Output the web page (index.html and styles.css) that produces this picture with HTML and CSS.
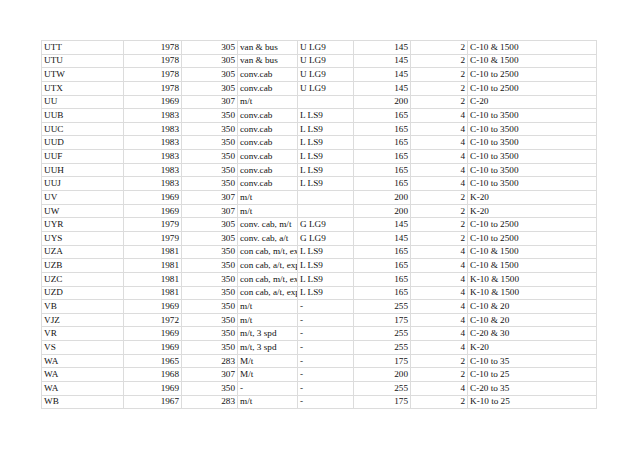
FILE: index.html
```html
<!DOCTYPE html>
<html>
<head>
<meta charset="utf-8">
<link rel="stylesheet" href="styles.css">
</head>
<body>
<table class="sheet">
<colgroup>
<col class="c1"><col class="c2"><col class="c3"><col class="c4"><col class="c5"><col class="c6"><col class="c7"><col class="c8">
</colgroup>
<tbody>
<tr><td>UTT</td><td class="r">1978</td><td class="r">305</td><td>van &amp; bus</td><td>U LG9</td><td class="r">145</td><td class="r">2</td><td>C-10 &amp; 1500</td></tr>
<tr><td>UTU</td><td class="r">1978</td><td class="r">305</td><td>van &amp; bus</td><td>U LG9</td><td class="r">145</td><td class="r">2</td><td>C-10 &amp; 1500</td></tr>
<tr><td>UTW</td><td class="r">1978</td><td class="r">305</td><td>conv.cab</td><td>U LG9</td><td class="r">145</td><td class="r">2</td><td>C-10 to 2500</td></tr>
<tr><td>UTX</td><td class="r">1978</td><td class="r">305</td><td>conv.cab</td><td>U LG9</td><td class="r">145</td><td class="r">2</td><td>C-10 to 2500</td></tr>
<tr><td>UU</td><td class="r">1969</td><td class="r">307</td><td>m/t</td><td></td><td class="r">200</td><td class="r">2</td><td>C-20</td></tr>
<tr><td>UUB</td><td class="r">1983</td><td class="r">350</td><td>conv.cab</td><td>L LS9</td><td class="r">165</td><td class="r">4</td><td>C-10 to 3500</td></tr>
<tr><td>UUC</td><td class="r">1983</td><td class="r">350</td><td>conv.cab</td><td>L LS9</td><td class="r">165</td><td class="r">4</td><td>C-10 to 3500</td></tr>
<tr><td>UUD</td><td class="r">1983</td><td class="r">350</td><td>conv.cab</td><td>L LS9</td><td class="r">165</td><td class="r">4</td><td>C-10 to 3500</td></tr>
<tr><td>UUF</td><td class="r">1983</td><td class="r">350</td><td>conv.cab</td><td>L LS9</td><td class="r">165</td><td class="r">4</td><td>C-10 to 3500</td></tr>
<tr><td>UUH</td><td class="r">1983</td><td class="r">350</td><td>conv.cab</td><td>L LS9</td><td class="r">165</td><td class="r">4</td><td>C-10 to 3500</td></tr>
<tr><td>UUJ</td><td class="r">1983</td><td class="r">350</td><td>conv.cab</td><td>L LS9</td><td class="r">165</td><td class="r">4</td><td>C-10 to 3500</td></tr>
<tr><td>UV</td><td class="r">1969</td><td class="r">307</td><td>m/t</td><td></td><td class="r">200</td><td class="r">2</td><td>K-20</td></tr>
<tr><td>UW</td><td class="r">1969</td><td class="r">307</td><td>m/t</td><td></td><td class="r">200</td><td class="r">2</td><td>K-20</td></tr>
<tr><td>UYR</td><td class="r">1979</td><td class="r">305</td><td>conv. cab, m/t</td><td>G LG9</td><td class="r">145</td><td class="r">2</td><td>C-10 to 2500</td></tr>
<tr><td>UYS</td><td class="r">1979</td><td class="r">305</td><td>conv. cab, a/t</td><td>G LG9</td><td class="r">145</td><td class="r">2</td><td>C-10 to 2500</td></tr>
<tr><td>UZA</td><td class="r">1981</td><td class="r">350</td><td class="clip">con cab, m/t, exp cab</td><td>L LS9</td><td class="r">165</td><td class="r">4</td><td>C-10 &amp; 1500</td></tr>
<tr><td>UZB</td><td class="r">1981</td><td class="r">350</td><td class="clip">con cab, a/t, exp cab</td><td>L LS9</td><td class="r">165</td><td class="r">4</td><td>C-10 &amp; 1500</td></tr>
<tr><td>UZC</td><td class="r">1981</td><td class="r">350</td><td class="clip">con cab, m/t, exp cab</td><td>L LS9</td><td class="r">165</td><td class="r">4</td><td>K-10 &amp; 1500</td></tr>
<tr><td>UZD</td><td class="r">1981</td><td class="r">350</td><td class="clip">con cab, a/t, exp cab</td><td>L LS9</td><td class="r">165</td><td class="r">4</td><td>K-10 &amp; 1500</td></tr>
<tr><td>VB</td><td class="r">1969</td><td class="r">350</td><td>m/t</td><td>-</td><td class="r">255</td><td class="r">4</td><td>C-10 &amp; 20</td></tr>
<tr><td>VJZ</td><td class="r">1972</td><td class="r">350</td><td>m/t</td><td>-</td><td class="r">175</td><td class="r">4</td><td>C-10 &amp; 20</td></tr>
<tr><td>VR</td><td class="r">1969</td><td class="r">350</td><td>m/t, 3 spd</td><td>-</td><td class="r">255</td><td class="r">4</td><td>C-20 &amp; 30</td></tr>
<tr><td>VS</td><td class="r">1969</td><td class="r">350</td><td>m/t, 3 spd</td><td>-</td><td class="r">255</td><td class="r">4</td><td>K-20</td></tr>
<tr><td>WA</td><td class="r">1965</td><td class="r">283</td><td>M/t</td><td>-</td><td class="r">175</td><td class="r">2</td><td>C-10 to 35</td></tr>
<tr><td>WA</td><td class="r">1968</td><td class="r">307</td><td>M/t</td><td>-</td><td class="r">200</td><td class="r">2</td><td>C-10 to 25</td></tr>
<tr><td>WA</td><td class="r">1969</td><td class="r">350</td><td>-</td><td>-</td><td class="r">255</td><td class="r">4</td><td>C-20 to 35</td></tr>
<tr><td>WB</td><td class="r">1967</td><td class="r">283</td><td>m/t</td><td>-</td><td class="r">175</td><td class="r">2</td><td>K-10 to 25</td></tr>
</tbody>
</table>
</body>
</html>
```
FILE: styles.css
```css
html, body {
  margin: 0;
  padding: 0;
  background: #ffffff;
}
body {
  padding: 40px 0 0 41px;
  font-family: "Liberation Serif", "Times New Roman", serif;
  font-size: 9.2px;
  color: #111111;
}
.sheet {
  border-collapse: collapse;
  table-layout: fixed;
  width: 555px;
}
.c1 { width: 82px; }
.c2 { width: 58px; }
.c3 { width: 56px; }
.c4 { width: 60px; }
.c5 { width: 56px; }
.c6 { width: 57px; }
.c7 { width: 57px; }
.c8 { width: 129px; }
.sheet tr {
  height: 13.65px;
}
.sheet td {
  border: 1px solid #dcdcdc;
  padding: 0 2px;
  line-height: 11px;
  white-space: nowrap;
  overflow: hidden;
  vertical-align: middle;
}
.sheet td.r {
  text-align: right;
}
.sheet td.clip {
  text-overflow: clip;
}
```
